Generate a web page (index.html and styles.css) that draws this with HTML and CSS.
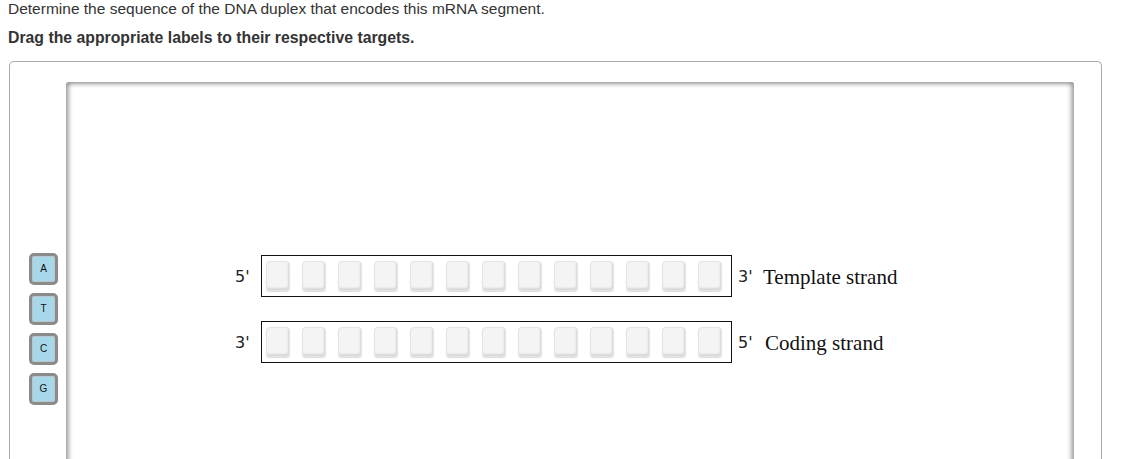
FILE: index.html
```html
<!DOCTYPE html>
<html lang="en">
<head>
    <meta charset="UTF-8">
    <title>DNA Duplex</title>
    <link rel="stylesheet" href="styles.css">
</head>
<body>
    <p class="question">Determine the sequence of the DNA duplex that encodes this mRNA segment.</p>
    <p class="instructions">Drag the appropriate labels to their respective targets.</p>

    <div class="panel">
        <div class="palette">
            <div class="tile">A</div>
            <div class="tile">T</div>
            <div class="tile">C</div>
            <div class="tile">G</div>
        </div>
        <div class="canvas">
            <div class="strands">
                <div class="strand">
                    <span class="end start">5'</span>
                    <div class="slots">
                        <div class="slot"></div><div class="slot"></div><div class="slot"></div><div class="slot"></div><div class="slot"></div><div class="slot"></div><div class="slot"></div><div class="slot"></div><div class="slot"></div><div class="slot"></div><div class="slot"></div><div class="slot"></div><div class="slot"></div>
                    </div>
                    <span class="end">3'</span>
                    <span class="strand-name">Template strand</span>
                </div>
                <div class="strand">
                    <span class="end start">3'</span>
                    <div class="slots">
                        <div class="slot"></div><div class="slot"></div><div class="slot"></div><div class="slot"></div><div class="slot"></div><div class="slot"></div><div class="slot"></div><div class="slot"></div><div class="slot"></div><div class="slot"></div><div class="slot"></div><div class="slot"></div><div class="slot"></div>
                    </div>
                    <span class="end">5'</span>
                    <span class="strand-name coding">Coding strand</span>
                </div>
            </div>
        </div>
    </div>
</body>
</html>
```

FILE: styles.css
```css
body {
    margin: 0;
    padding: 0 8px;
    font-family: "Liberation Sans", Arial, sans-serif;
    font-size: 15.5px;
    color: #333;
    background-color: #fff;
}
.question {
    margin: 0;
    line-height: 17px;
}
.instructions {
    margin: 12px 0 0;
    line-height: 17px;
    font-size: 15.8px;
    font-weight: bold;
}
.panel {
    display: flex;
    align-items: flex-start;
    margin: 15px 31px 0 1px;
    padding: 20px 27px 0 19px;
    height: 420px;
    border: 1px solid #aaa;
    border-bottom: none;
    border-radius: 5px 5px 0 0;
}
.palette {
    display: flex;
    flex-direction: column;
    gap: 8px;
    width: 29px;
    margin-top: 171px;
    margin-right: 8px;
    flex-shrink: 0;
}
.tile {
    box-sizing: border-box;
    width: 29px;
    height: 32px;
    display: flex;
    align-items: center;
    justify-content: center;
    padding-bottom: 2px;
    border: 3px solid #8b8b8b;
    border-radius: 5px;
    background-color: #a6d8ea;
    box-shadow: inset 0 0 0 1px #b9c6cc;
    font-size: 10px;
    color: #111;
}
.canvas {
    flex: 1;
    height: 400px;
    background-color: #fff;
    border-radius: 3px 3px 0 0;
    box-shadow: inset 0 4px 4px -2px #9a9a9a,
                inset 5px 0 4px -2px #a8a8a8,
                inset -5px 0 4px -2px #a8a8a8;
}
.strands {
    display: flex;
    flex-direction: column;
    gap: 24px;
    padding: 173px 0 0 169px;
}
.strand {
    display: flex;
    align-items: center;
}
.end {
    font-family: "DejaVu Sans", sans-serif;
    font-size: 16px;
    color: #222;
    width: 20px;
    padding-left: 6px;
}
.end.start {
    width: 26px;
    padding-left: 0;
}
.slots {
    display: flex;
    gap: 12px;
    padding: 5px 9px 5px 4px;
    border: 1px solid #111;
}
.slot {
    box-sizing: border-box;
    width: 24px;
    height: 30px;
    border: 1px solid #e4e4e4;
    border-radius: 4px;
    background-color: #f4f4f4;
    box-shadow: inset -1px -2px 2px rgba(0, 0, 0, 0.12), 0 1px 1px rgba(0, 0, 0, 0.14);
}
.strand-name {
    font-family: "Liberation Serif", "Times New Roman", serif;
    font-size: 21px;
    color: #111;
    margin-left: 5px;
    padding-top: 3px;
}
.strand-name.coding {
    margin-left: 7px;
}
```
